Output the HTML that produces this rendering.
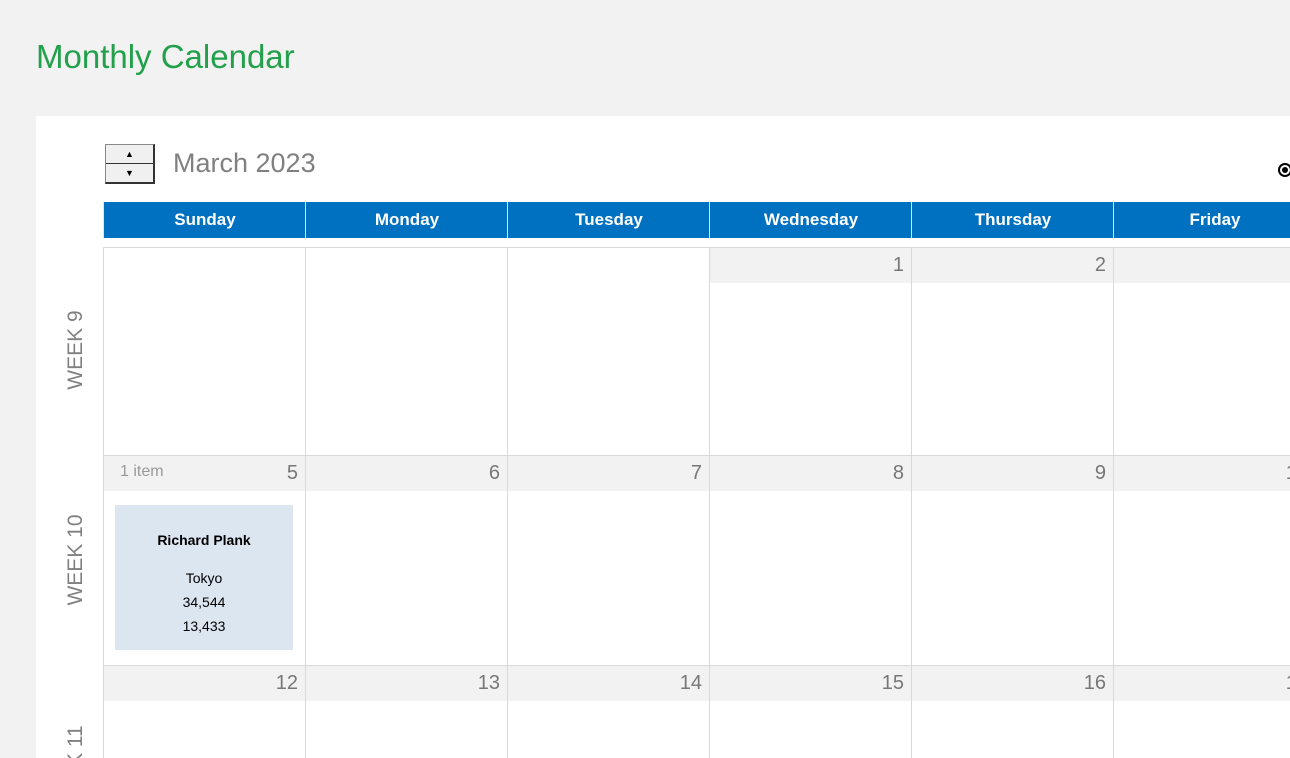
<!DOCTYPE html>
<html><head><style>
*{margin:0;padding:0;box-sizing:border-box}
html,body{width:1290px;height:758px;overflow:hidden}
body{background:#f2f2f2;font-family:"Liberation Sans",sans-serif;position:relative}
.a{position:absolute}
h1{position:absolute;left:36px;top:38px;font-size:33px;font-weight:normal;color:#22a04b}
.panel{position:absolute;left:36px;top:116px;width:1254px;height:642px;background:#fff;overflow:hidden}
.hd{position:absolute;top:202px;height:36px;background:#0070c0;color:#fff;font-weight:bold;font-size:17px;text-align:center;line-height:36px;border-left:1px solid #d9e6f5}
.cell{position:absolute;border-left:1px solid #d9d9d9;border-top:1px solid #d9d9d9;background:#fff}
.band{position:absolute;left:0;right:0;top:0;height:35px;background:#f2f2f2;text-align:right;padding-right:8px;font-size:20px;color:#777;line-height:35px}
.wk{position:absolute;font-size:21px;color:#808080;transform:rotate(-90deg);white-space:nowrap;width:200px;text-align:center}
#g{position:absolute;left:0;top:0;width:1290px;height:758px;overflow:hidden}
</style></head><body>
<h1>Monthly Calendar</h1>
<div class="panel"></div>
<div class="a" style="left:105px;top:144px;width:50px;height:40px;border:1px solid #888;border-right:2px solid #333;border-bottom:2px solid #333;background:#f0f0f0">
<div style="height:19px;border-bottom:1px solid #333;text-align:center;font-size:9px;line-height:18px">▲</div>
<div style="text-align:center;font-size:9px;line-height:18px">▼</div></div>
<div class="a" style="left:173px;top:148px;font-size:27px;color:#808080">March 2023</div>
<div class="a" style="left:1278px;top:163px;width:12px;height:14px;overflow:hidden"><div style="position:absolute;left:0;top:0;width:14px;height:14px;border-radius:50%;border:2px solid #000;background:#fff"><div style="position:absolute;left:2px;top:2px;width:6px;height:6px;border-radius:50%;background:#000"></div></div></div>
<div id="g"></div>
<div class="a" style="left:0;top:0;width:1290px;height:758px;overflow:hidden">
<div class="wk" style="left:-24px;top:338px">WEEK 9</div>
<div class="wk" style="left:-24px;top:548px">WEEK 10</div>
<div class="wk" style="left:-24px;top:758px">WEEK 11</div>
</div>
<script>
var names=["Sunday","Monday","Tuesday","Wednesday","Thursday","Friday"],h="";
var rows=[["","","","1","2","3"],["5","6","7","8","9","10"],["12","13","14","15","16","17"]];
var tops=[247,455,665],hs=[208,210,93];
for(var i=0;i<6;i++){var x=103+i*202;var w=Math.min(202,1290-x);
h+='<div class="hd" style="left:'+x+'px;width:'+w+'px;overflow:hidden"><div style="width:202px">'+names[i]+'</div></div>';
for(var r=0;r<3;r++){var d=rows[r][i];
h+='<div class="cell" style="left:'+x+'px;top:'+tops[r]+'px;width:'+w+'px;height:'+hs[r]+'px;overflow:hidden">'+(d?'<div class="band" style="width:202px">'+d+'</div>':'')+'</div>';}}
document.getElementById('g').innerHTML=h;
</script>
<div class="a" style="left:120px;top:463px;font-size:16px;color:#999">1 item</div>
<div class="a" style="left:115px;top:505px;width:178px;height:145px;background:#dce6f1;text-align:center;font-size:14px;color:#000">
<div style="margin-top:27px;font-weight:bold">Richard Plank</div>
<div style="margin-top:22px">Tokyo</div>
<div style="margin-top:8px">34,544</div>
<div style="margin-top:8px">13,433</div></div>
</body></html>
